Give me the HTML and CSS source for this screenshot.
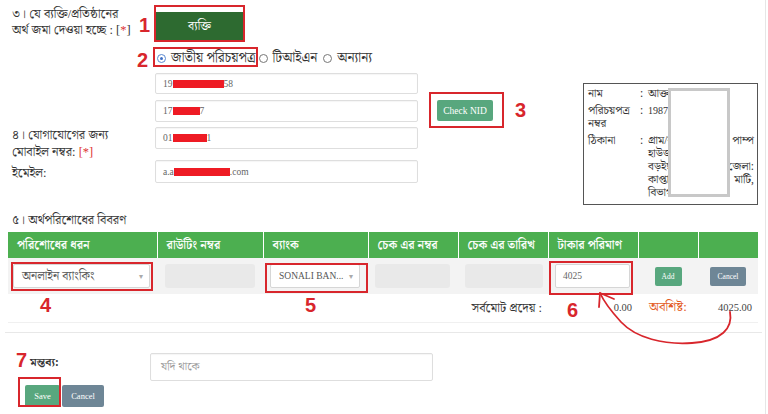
FILE: index.html
```html
<!DOCTYPE html>
<html lang="bn">
<head>
<meta charset="utf-8">
<title>অর্থ জমা</title>
<link rel="stylesheet" href="styles.css">
</head>
<body>
<div class="page">
  <div class="top">
    <div class="form">
      <div class="row r-type">
        <div class="label">৩। যে ব্যক্তি/প্রতিষ্ঠানের<br>অর্থ জমা দেওয়া হচ্ছে : [<span class="req">*</span>]</div>
        <div class="field">
          <div class="type-wrap"><div class="type-btn">ব্যক্তি</div></div>
        </div>
      </div>
      <div class="row r-radio">
        <div class="label"></div>
        <div class="field radios">
          <span class="radio checked"></span><span class="opt first">জাতীয় পরিচয়পত্র</span>
          <span class="radio"></span><span class="opt">টিআইএন</span>
          <span class="radio"></span><span class="opt">অন্যান্য</span>
        </div>
      </div>
      <div class="row r-nid">
        <div class="label"></div>
        <div class="field"><div class="input">19<span class="redact w51"></span>58</div></div>
      </div>
      <div class="row r-dob">
        <div class="label"></div>
        <div class="field"><div class="input tall">17<span class="redact w27"></span>7</div></div>
        <div class="extra"><button class="btn green check">Check NID</button></div>
      </div>
      <div class="row r-mobile">
        <div class="label lh17">৪। যোগাযোগের জন্য<br>মোবাইল নম্বর: <span class="req">[*]</span></div>
        <div class="field"><div class="input tall">01<span class="redact w34"></span>1</div></div>
      </div>
      <div class="row r-email">
        <div class="label email-label">ইমেইল:</div>
        <div class="field"><div class="input taller">a.a<span class="redact w56"></span>.com</div></div>
      </div>
    </div>
    <div class="nid-box">
      <div class="nid-grid">
        <div>নাম</div><div>:</div><div>আক্তারুজ্জামান</div>
        <div>পরিচয়পত্র<br>নম্বর</div><div>:</div><div class="latin">19873456789012</div>
        <div>ঠিকানা</div><div>:</div>
        <div class="addr">
          <div class="ln"><span>গ্রাম/রাস্তা:</span><span>পাম্প</span></div>
          <div class="ln"><span>হাউজ</span><span></span></div>
          <div class="ln"><span>বড়ইছড়ি</span><span>জেলা:</span></div>
          <div class="ln"><span>কাপ্তাই</span><span>মাটি,</span></div>
          <div class="ln"><span>বিভাগ</span><span></span></div>
        </div>
      </div>
      <div class="photo"></div>
    </div>
  </div>

  <div class="section-title">৫। অর্থপরিশোধের বিবরণ</div>

  <table class="pay">
    <colgroup>
      <col style="width:149px"><col style="width:106px"><col style="width:105px"><col style="width:90px">
      <col style="width:90px"><col style="width:90px"><col style="width:60px"><col style="width:60px">
    </colgroup>
    <thead>
      <tr>
        <th>পরিশোধের ধরন</th><th>রাউটিং নম্বর</th><th>ব্যাংক</th><th>চেক এর নম্বর</th>
        <th>চেক এর তারিখ</th><th>টাকার পরিমাণ</th><th></th><th></th>
      </tr>
    </thead>
    <tbody>
      <tr class="entry">
        <td><div class="select w137"><span>অনলাইন ব্যাংকিং</span><span class="caret">▾</span></div></td>
        <td class="pl8"><div class="disabled w90"></div></td>
        <td class="pl7"><div class="select w90 latin"><span>SONALI BAN...</span><span class="caret">▾</span></div></td>
        <td class="pl7"><div class="disabled w75"></div></td>
        <td class="pl7"><div class="disabled w78"></div></td>
        <td class="pl7"><div class="amount">4025</div></td>
        <td class="center"><button class="btn green small">Add</button></td>
        <td class="center"><button class="btn gray small">Cancel</button></td>
      </tr>
      <tr class="total">
        <td></td><td></td><td></td><td></td>
        <td class="right">সর্বমোট প্রদেয় :</td>
        <td class="right num">0.00</td>
        <td class="center due">অবশিষ্ট:</td>
        <td class="right num pr8">4025.00</td>
      </tr>
    </tbody>
  </table>

  <div class="divider"></div>

  <div class="comment-row">
    <div class="comment-label">মন্তব্য:</div>
    <div class="comment-input">যদি থাকে</div>
  </div>
  <div class="actions">
    <button class="btn green save">Save</button>
    <button class="btn gray cancel">Cancel</button>
  </div>

  <!-- annotations -->
  <div class="mark-box m-type"></div>
  <div class="mark-box m-radio"></div>
  <div class="mark-box m-check"></div>
  <div class="mark-box m-sel1"></div>
  <div class="mark-box m-sel2"></div>
  <div class="mark-box m-amt"></div>
  <div class="mark-box m-save"></div>
  <span class="mark n1">1</span>
  <span class="mark n2">2</span>
  <span class="mark n3">3</span>
  <span class="mark n4">4</span>
  <span class="mark n5">5</span>
  <span class="mark n6">6</span>
  <span class="mark n7">7</span>
  <svg class="arrow" width="768" height="414" viewBox="0 0 768 414">
    <path d="M730,312 C733,328 722,341 692,343 C664,345 636,338 621,322 C611,311 604,302 600,293" fill="none" stroke="#d8262c" stroke-width="1.8" stroke-linecap="round"/>
    <path d="M599,307 L600,293 L614,299" fill="none" stroke="#d8262c" stroke-width="1.8" stroke-linecap="round" stroke-linejoin="round"/>
  </svg>
</div>
</body>
</html>
```
FILE: styles.css
```css
* { box-sizing: border-box; }
html, body { margin: 0; padding: 0; background: #fff; }
body {
  font-family: "Liberation Serif", "Noto Serif Bengali", "Noto Sans Bengali", "Lohit Bengali", "FreeSerif", serif;
  font-size: 12.5px;
  color: #333;
}
.page {
  position: relative;
  width: 766px;
  height: 414px;
  padding-top: 5px;
  border-right: 1px solid #e6e6e6;
  overflow: hidden;
}
.top { display: flex; }
.form { width: 583px; }
.row {
  display: grid;
  grid-template-columns: 155px 263px 1fr;
}
.label { padding-left: 12px; line-height: 16px; white-space: nowrap; }
.lh17 { line-height: 17px; }
.req { color: #d33; }

.r-type { height: 37px; }
.r-type .label { padding-top: 1px; }
.type-wrap { width: 91px; height: 37px; margin-left: -1px; padding: 7px 2px 2px 2px; }
.type-btn {
  height: 100%;
  background: #2d6a30;
  color: #fff;
  display: flex;
  align-items: center;
  justify-content: center;
  font-size: 12px;
}

.r-radio { margin-top: 5px; height: 20px; }
.radios { display: flex; align-items: center; padding-left: 2px; font-size: 13.5px; white-space: nowrap; }
.radio {
  width: 9px; height: 9px;
  border: 1px solid #777;
  border-radius: 50%;
  display: inline-block;
  margin-right: 5px;
  position: relative;
  flex: none;
}
.radio.checked { border-color: #5a88d0; }
.radio.checked::after {
  content: "";
  position: absolute;
  left: 2px; top: 2px;
  width: 3px; height: 3px;
  border-radius: 50%;
  background: #3f6fc4;
}
.opt { margin-right: 6px; }
.opt.first { margin-right: 3px; }

.input {
  height: 21px;
  border: 1px solid #dedede;
  border-radius: 2px;
  background: #fff;
  box-shadow: inset 0 1px 1px rgba(0,0,0,0.04);
  display: flex;
  align-items: center;
  padding-left: 7px;
  font-size: 9.5px;
  color: #666;
}
.input.tall { height: 22px; }
.input.taller { height: 23px; }
.redact { display: inline-block; height: 8px; background: #ee1b24; }
.w27 { width: 27px; }
.w34 { width: 34px; }
.w51 { width: 51px; }
.w56 { width: 56px; }

.r-nid { margin-top: 6px; }
.r-dob { margin-top: 6px; }
.r-mobile { margin-top: 5px; height: 31px; }
.r-email { margin-top: 2px; }
.email-label { padding-top: 5px; }

.extra { padding-left: 19px; }
.btn {
  border: none;
  border-radius: 2px;
  color: #fff;
  font-family: "Liberation Serif", serif;
  padding: 0;
  cursor: pointer;
}
.green { background: #58a77e; }
.gray { background: #6e8696; }
.check { width: 56px; height: 21px; font-size: 9.5px; }

.nid-box {
  position: relative;
  width: 175px;
  height: 122px;
  margin-top: 78px;
  border: 1px solid #555;
  padding: 3px 3px 0 4px;
  overflow: hidden;
  font-size: 11.5px;
  color: #333;
}
.nid-grid {
  display: grid;
  grid-template-columns: 52px 8px 1fr;
  row-gap: 4px;
  line-height: 13px;
}
.nid-grid .latin { font-size: 10px; }
.ln { display: flex; justify-content: space-between; white-space: nowrap; }
.photo {
  position: absolute;
  left: 84px;
  top: 4px;
  width: 62px;
  height: 109px;
  background: #fff;
  border: 3px solid #c8c8c8;
}

.section-title { margin-top: 7px; padding-left: 12px; line-height: 16px; margin-bottom: 4px; }

.pay {
  margin-left: 8px;
  width: 750px;
  table-layout: fixed;
  border-collapse: collapse;
}
.pay th {
  height: 26px;
  background: #4caf50;
  color: #fff;
  font-weight: 600;
  text-align: left;
  padding: 0 0 0 9px;
  font-size: 12px;
  border-right: 1px solid rgba(255,255,255,0.55);
  white-space: nowrap;
  overflow: hidden;
}
.pay th:last-child { border-right: none; }
.pay td { padding: 0 0 0 5px; vertical-align: middle; }
.entry td { height: 36px; background: #f3f3f3; }
.total td { height: 28px; background: #fff; border-bottom: 1px solid #f0f0f0; font-size: 12.5px; white-space: nowrap; }
.pl7 { padding-left: 7px !important; }
.pl8 { padding-left: 8px !important; }
.pr8 { padding-right: 8px !important; }
.center { text-align: center; padding-left: 0 !important; }
.right { text-align: right; padding-right: 6px !important; }
.num { font-size: 10.5px !important; color: #444; }
.due { color: #e35a22; font-size: 13px !important; }

.select {
  height: 24px;
  background: #fff;
  border: 1px solid #d6d6d6;
  border-radius: 2px;
  display: flex;
  align-items: center;
  justify-content: space-between;
  padding: 0 6px 0 8px;
  font-size: 12px;
  color: #555;
  white-space: nowrap;
}
.select.latin { font-size: 9.5px; }
.caret { color: #aaa; font-size: 8px; font-family: "DejaVu Sans", sans-serif; }
.w137 { width: 137px; }
.w90 { width: 90px; }
.w75 { width: 75px; }
.w78 { width: 78px; }
.disabled { height: 24px; background: #e9e9e9; border-radius: 3px; }
.amount {
  width: 75px;
  height: 24px;
  background: #fff;
  border: 1px solid #d6d6d6;
  border-radius: 2px;
  display: flex;
  align-items: center;
  padding-left: 7px;
  font-size: 9.5px;
  color: #666;
}
.small { height: 19px; font-size: 7.5px; }
.green.small { width: 27px; }
.gray.small { width: 36px; }

.divider { margin: 9px 0 0 5px; width: 757px; border-top: 1px solid #e8e8e8; }

.comment-row { display: grid; grid-template-columns: 150px 283px; margin-top: 20px; }
.comment-label { padding-left: 30px; padding-top: 1px; font-weight: bold; font-size: 11.5px; line-height: 16px; }
.comment-input {
  height: 28px;
  border: 1px solid #dedede;
  border-radius: 2px;
  box-shadow: inset 0 1px 1px rgba(0,0,0,0.04);
  display: flex;
  align-items: center;
  padding-left: 10px;
  color: #999;
  font-size: 11.5px;
}
.actions { display: flex; gap: 2px; padding-left: 25px; margin-top: 4px; }
.save { width: 35px; height: 22px; font-size: 8.5px; }
.cancel { width: 42px; height: 22px; font-size: 8.5px; }

/* annotations */
.mark-box { position: absolute; border: 2px solid #d8262c; pointer-events: none; }
.m-type { left: 154px; top: 5px; width: 91px; height: 37px; }
.m-radio { left: 153px; top: 47px; width: 105px; height: 20px; }
.m-check { left: 429px; top: 92px; width: 75px; height: 36px; }
.m-sel1 { left: 11px; top: 262px; width: 142px; height: 29px; }
.m-sel2 { left: 265px; top: 263px; width: 103px; height: 30px; }
.m-amt { left: 549px; top: 261px; width: 84px; height: 34px; }
.m-save { left: 18px; top: 377px; width: 43px; height: 30px; }
.mark {
  position: absolute;
  font-family: "Liberation Sans", sans-serif;
  font-weight: bold;
  font-size: 20px;
  line-height: 20px;
  color: #d8262c;
}
.n1 { left: 139px; top: 15px; }
.n2 { left: 137px; top: 50px; }
.n3 { left: 515px; top: 100px; }
.n4 { left: 40px; top: 295px; }
.n5 { left: 305px; top: 295px; }
.n6 { left: 567px; top: 300px; }
.n7 { left: 16px; top: 350px; }
.arrow { position: absolute; left: 0; top: 0; pointer-events: none; }
```
